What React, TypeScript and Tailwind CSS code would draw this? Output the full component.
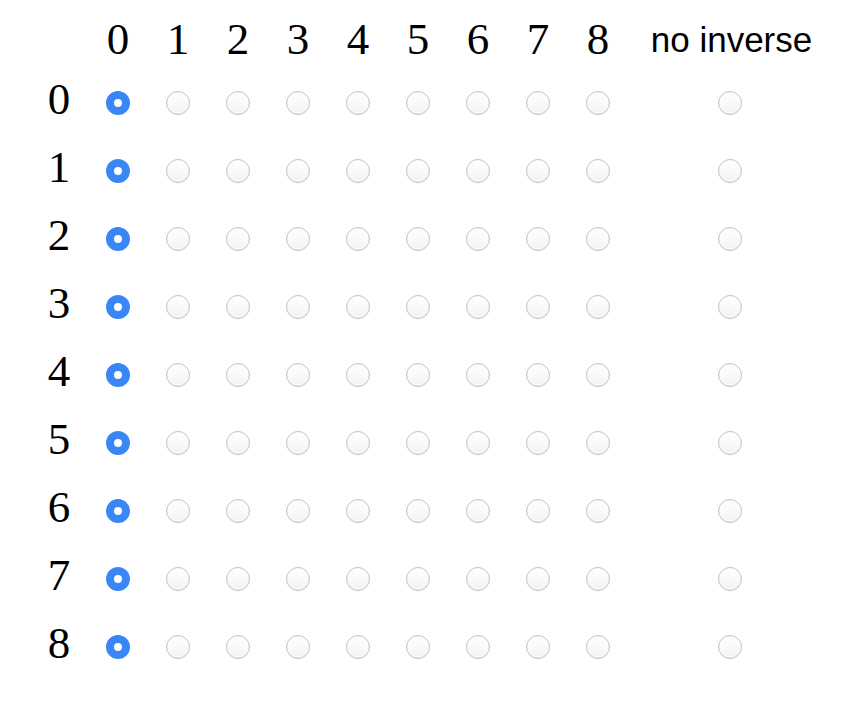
import React, { useState } from "react";

const cols = [0, 1, 2, 3, 4, 5, 6, 7, 8];
const rows = [0, 1, 2, 3, 4, 5, 6, 7, 8];

const serif = "font-['Liberation_Serif','Times_New_Roman',serif]";

const Radio: React.FC<{ name: string; checked: boolean; onChange: () => void }> = ({
  name,
  checked,
  onChange,
}) => (
  <input
    type="radio"
    name={name}
    checked={checked}
    onChange={onChange}
    className="appearance-none w-[24px] h-[24px] rounded-full border border-[#c2c2c2] bg-gradient-to-b from-white to-[#f4f4f4] checked:border-[8px] checked:border-[#3b86f7] checked:bg-white checked:from-white checked:to-white cursor-pointer outline-none"
  />
);

export default function App() {
  // selected inverse per row, -1 = "no inverse"
  const [sel, setSel] = useState<number[]>(rows.map(() => 0));

  const pick = (r: number, c: number) =>
    setSel((prev) => prev.map((v, i) => (i === r ? c : v)));

  return (
    <div className="w-[842px] h-[716px] bg-white text-black pl-[30px] pt-[17px]">
      <div className="grid grid-cols-[58px_repeat(9,60px)_204px] auto-rows-[68px] grid-rows-[52px]">
        <div />
        {cols.map((c) => (
          <div
            key={c}
            className={`flex items-center justify-center pb-[8px] text-[45px] leading-none ${serif}`}
          >
            {c}
          </div>
        ))}
        <div className="flex items-center justify-center pb-[8px] pl-[3px] text-[35px] leading-none font-['Liberation_Sans',Arial,sans-serif]">
          no inverse
        </div>

        {rows.map((r) => (
          <React.Fragment key={r}>
            <div
              className={`flex items-center justify-center pb-[8px] text-[45px] leading-none ${serif}`}
            >
              {r}
            </div>
            {cols.map((c) => (
              <div key={c} className="flex items-center justify-center">
                <Radio name={`row-${r}`} checked={sel[r] === c} onChange={() => pick(r, c)} />
              </div>
            ))}
            <div className="flex items-center justify-center">
              <Radio name={`row-${r}`} checked={sel[r] === -1} onChange={() => pick(r, -1)} />
            </div>
          </React.Fragment>
        ))}
      </div>
    </div>
  );
}
